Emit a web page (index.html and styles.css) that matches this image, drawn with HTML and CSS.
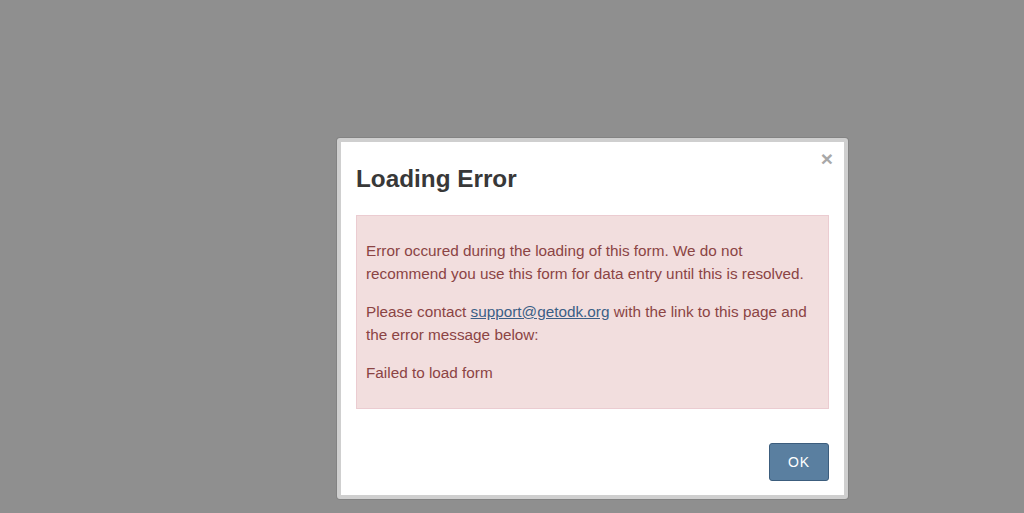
FILE: index.html
```html
<!DOCTYPE html>
<html>
<head>
<meta charset="utf-8">
<link rel="stylesheet" href="styles.css">
</head>
<body>
<div class="modal">
  <div class="modal-header">
    <h3 class="title">Loading Error</h3>
    <span class="close">×</span>
  </div>
  <div class="modal-body">
    <div class="alert">
      <p>Error occured during the loading of this form. We do not recommend you use this form for data entry until this is resolved.</p>
      <p>Please contact <a href="#">support@getodk.org</a> with the link to this page and the error message below:</p>
      <p>Failed to load form</p>
    </div>
  </div>
  <div class="modal-footer">
    <button class="btn">OK</button>
  </div>
</div>
</body>
</html>
```
FILE: styles.css
```css
html, body {
  margin: 0;
  padding: 0;
  background: #8f8f8f;
  height: 513px;
  overflow: hidden;
  font-family: "Liberation Sans", Arial, sans-serif;
}
.modal {
  margin: 138px 0 0 337px;
  width: 503px;
  height: 353px;
  background: #fff;
  border: 4px solid #cfcfcf;
  border-radius: 3px;
  box-shadow: 0 0 0 1px rgba(0,0,0,0.08);
  display: flex;
  flex-direction: column;
  position: relative;
}
.modal-header {
  padding: 23px 15px 0 15px;
}
.title {
  margin: 0;
  font-size: 24.3px;
  font-weight: bold;
  color: #383838;
  line-height: 28px;
}
.close {
  position: absolute;
  top: 6px;
  right: 11px;
  font-size: 21px;
  font-weight: bold;
  color: #a8a8a8;
  line-height: 21px;
}
.modal-body {
  padding: 22px 15px 0 15px;
}
.alert {
  background: #f2dede;
  border: 1px solid #ebccd1;
  padding: 23px 9px 9px 9px;
  color: #8b4444;
  font-size: 15.3px;
  line-height: 23px;
}
.alert p {
  margin: 0 0 15px 0;
}
.alert a {
  color: #3b5f86;
  text-decoration: underline;
}
.modal-footer {
  margin-top: auto;
  padding: 0 15px 14px 15px;
  display: flex;
  justify-content: flex-end;
}
.btn {
  width: 60px;
  height: 38px;
  background: #5a7fa0;
  border: 1px solid #3c5d7d;
  border-radius: 3px;
  color: #fff;
  font-family: "Liberation Sans", Arial, sans-serif;
  font-size: 14px;
  letter-spacing: 1px;
  padding: 0;
}
```
